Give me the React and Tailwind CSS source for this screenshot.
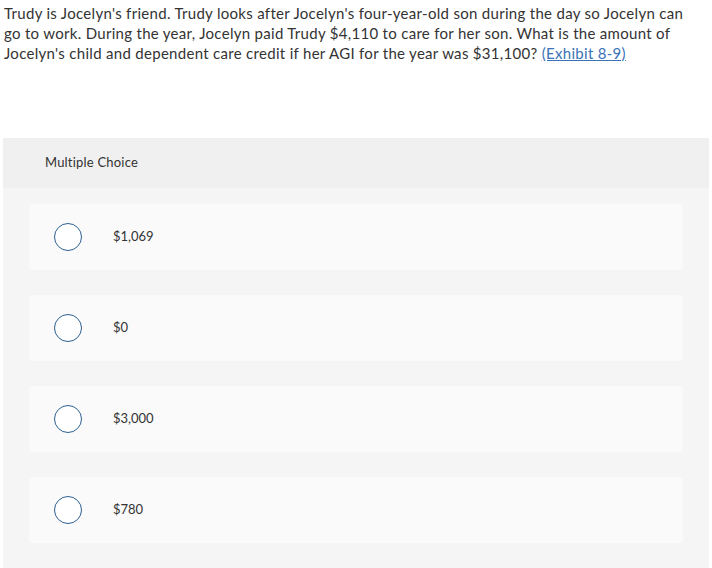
export default function App() {
  const options = ["$1,069", "$0", "$3,000", "$780"];

  return (
    <div className="min-h-screen bg-white font-['Lato','Liberation_Sans',sans-serif] text-[#333]">
      {/* QUESTION */}
      <p className="px-[4px] pt-[3px] text-[15px] leading-[20px] tracking-[0.3px] text-[#333]">
        Trudy is Jocelyn's friend. Trudy looks after Jocelyn's four-year-old son during the day so Jocelyn can
        <br />
        go to work. During the year, Jocelyn paid Trudy $4,110 to care for her son. What is the amount of
        <br />
        Jocelyn's child and dependent care credit if her AGI for the year was $31,100?{" "}
        <a href="#" className="text-[#3a73b8] underline">
          (Exhibit 8-9)
        </a>
      </p>

      {/* ANSWER PANEL */}
      <div className="mx-[3px] mt-[75px] rounded-t-[2px] bg-[#f5f5f5]">
        <div className="flex h-[50px] items-center bg-[#f0f0f0] pl-[42px] text-[13px] tracking-[0.2px] text-[#333]">
          Multiple Choice
        </div>
        <div className="flex flex-col gap-[25px] px-[26px] pt-[16px] pb-[30px]">
          {options.map((opt) => (
            <OptionRow key={opt} label={opt} />
          ))}
        </div>
      </div>
    </div>
  );
}

function OptionRow({ label }) {
  return (
    <label className="flex h-[66px] cursor-pointer items-center rounded-[3px] bg-[#fafafa] pl-[25px]">
      <span className="h-[28px] w-[28px] shrink-0 rounded-full border-[1.5px] border-[#2c5f91] bg-white" />
      <span className="ml-[31px] text-[13px] text-[#333]">{label}</span>
    </label>
  );
}
